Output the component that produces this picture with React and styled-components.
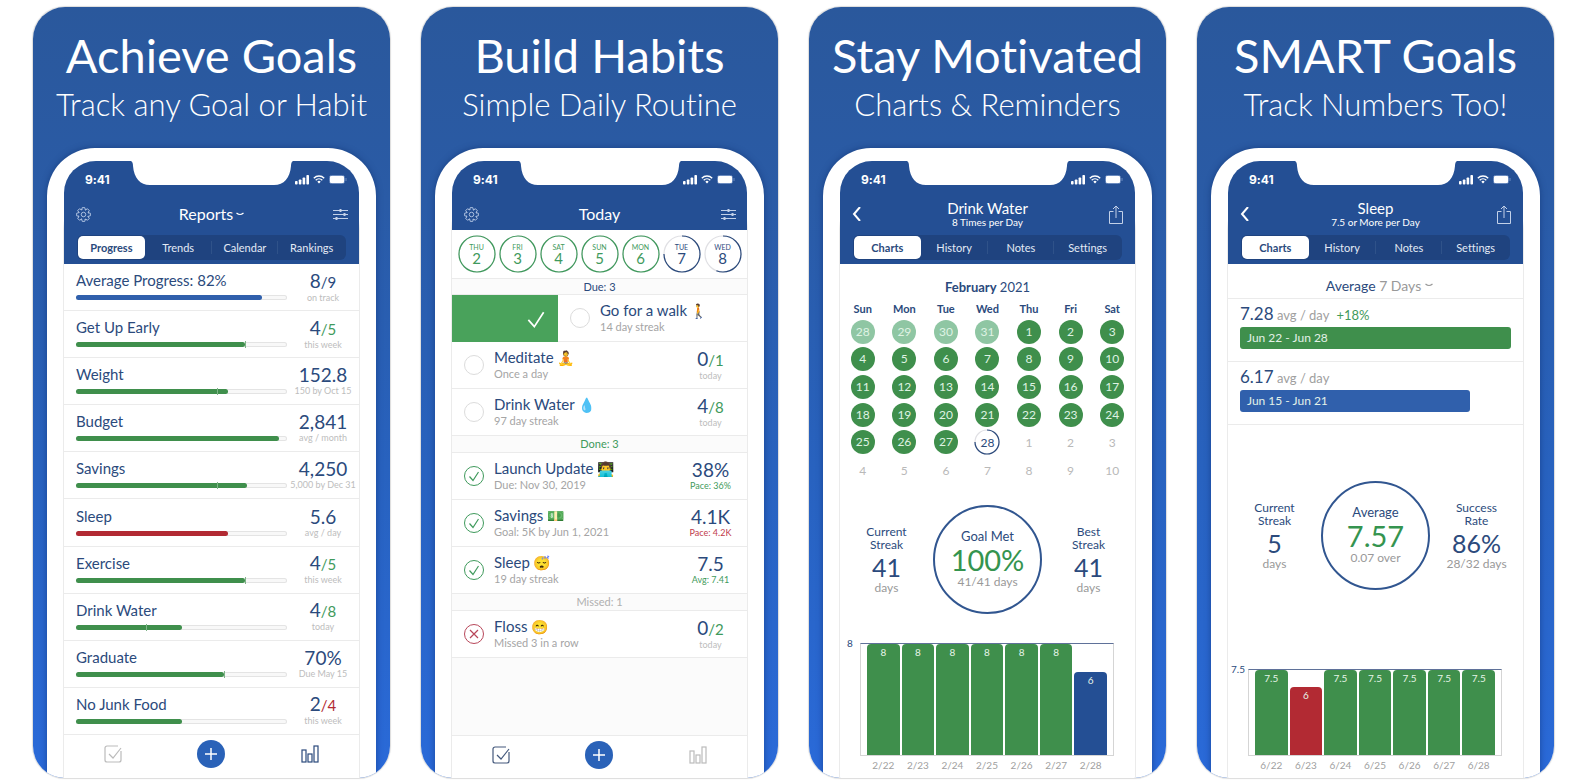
import React, { useState } from "react";
import styled, { createGlobalStyle } from "styled-components";

const navy = "#2b4a7c";
const green = "#3f8f4c";
const mint = "#3f9a5c";
const red = "#b22a33";
const blue = "#3060ac";
const line = "#ebebeb";

const GlobalStyle = createGlobalStyle`
  * {
    box-sizing: border-box;
  }
  body {
    margin: 0;
    background-color: #fff;
    font-family: Lato, "Liberation Sans", sans-serif;
    font-variant-ligatures: none;
    color: ${navy};
  }
  button {
    padding: 0;
    border: none;
    background: none;
    font: inherit;
    color: inherit;
    cursor: pointer;
  }
  h1, h2, h3, p, ul {
    margin: 0;
    padding: 0;
    font-weight: 400;
    list-style: none;
  }
  svg {
    display: block;
  }
`;

const Gallery = styled.main`
  display: grid;
  grid-template-columns: repeat(4, minmax(340px, 1fr));
  gap: 31px;
  min-height: 100vh;
  padding: 7px 30px 5px 33px;
`;

const Poster = styled.section`
  display: flex;
  flex-direction: column;
  overflow: hidden;
  border-radius: 32px;
  box-shadow: 0 0 1px 1px #dcdcdc;
  background-image: linear-gradient(#2a589c, #2a5ba6 25%, #2862bf 60%, #2a6ad9);
`;

const Headline = styled.header`
  padding: 17px 0 26px;
  color: #fff;
  text-align: center;
  white-space: nowrap;

  h1 {
    font-size: 47px;
    line-height: 62px;
  }
  p {
    font-size: 31px;
    font-weight: 300;
    line-height: 36px;
  }
`;

const Phone = styled.div`
  display: flex;
  flex: 1;
  flex-direction: column;
  margin: 0 14px;
  padding: 13px 17px 0;
  border-radius: 48px 48px 0 0;
  background-color: #fff;
  box-shadow: 0 0 6px rgba(10, 40, 100, 0.5);
`;

const Screen = styled.div`
  display: flex;
  flex: 1;
  flex-direction: column;
  overflow: hidden;
  border-radius: 32px 32px 0 0;
  box-shadow: 0 36px 0 1px ${line};
`;

const TopBar = styled.div`
  background-color: #244f94;
  color: #fff;
`;

const StatusRow = styled.div`
  display: grid;
  grid-template-columns: 1fr 162px 1fr;
  justify-items: center;
  align-items: center;
  height: 37px;

  & > svg {
    align-self: start;
  }
`;

const Clock = styled.span`
  font-family: Inter, sans-serif;
  font-size: 12px;
  font-weight: 700;
`;

const Signals = styled.div`
  display: flex;
  align-items: center;
  gap: 4px;
  padding-right: 10px;
`;

const NavRow = styled.div`
  display: grid;
  grid-template-columns: 38px 1fr 38px;
  justify-items: center;
  align-items: center;
  height: 32px;
`;

const NavTitle = styled.h2`
  display: flex;
  justify-content: center;
  align-items: center;
  gap: 3px;
  font-size: ${(p) => p.$size || "15px"};
  line-height: 16px;
`;

const NavNote = styled.p`
  font-size: 10px;
  line-height: 12px;
  text-align: center;
`;

const SegmentBox = styled.div`
  padding: 5px 0 4px;
`;

const Segments = styled.div`
  display: grid;
  grid-template-columns: repeat(4, 1fr);
  margin: 0 13px;
  padding: 1px;
  border-radius: 6px;
  background-color: #1f437f;
`;

const Segment = styled.button`
  height: 23px;
  border-radius: 5px;
  font-size: 11px;
  color: #e3eaf5;

  & + & {
    background-image: linear-gradient(#2f5289, #2f5289);
    background-size: 1px 13px;
    background-position: right center;
    background-repeat: no-repeat;
  }
  &&:last-child {
    background-image: none;
  }
  &&[aria-selected="true"] {
    background: #fff;
    color: ${navy};
    font-weight: 700;
  }
`;

const GoalList = styled.ul`
  display: grid;
  flex: 1;
  grid-auto-rows: 1fr;
`;

const Row = styled.li`
  display: grid;
  grid-template-columns: ${(p) => p.$columns || "1fr 72px"};
  align-items: center;
  min-height: 47px;
  padding-left: 12px;
  border-bottom: 1px solid ${line};
  background-color: #fff;
`;

const Name = styled.h3`
  font-size: 15px;
  line-height: 20px;
  white-space: nowrap;
`;

const Sub = styled.p`
  padding-bottom: 3px;
  font-size: 11px;
  line-height: 12px;
  color: #a5a5a5;
`;

const Track = styled.div`
  position: relative;
  height: 5px;
  margin: 5px 0 4px;
  border-radius: 3px;
  background-color: #f8f8f8;
  box-shadow: inset 0 0 0 1px #e4e4e4;
`;

const Fill = styled.div`
  height: 5px;
  border-radius: 3px;
  background-color: ${(p) => p.$color};
`;

const Marker = styled.i`
  position: absolute;
  top: -1px;
  width: 1px;
  height: 7px;
  background-color: #7fb588;
`;

const Figure = styled.div`
  text-align: center;
  white-space: nowrap;
`;

const Big = styled.p`
  font-size: 19px;
  line-height: 20px;

  span {
    font-size: 15px;
    color: ${(p) => p.$color};
  }
`;

const Tiny = styled.p`
  font-size: 9px;
  line-height: 12px;
  color: ${(p) => p.$color || "#bdbdbd"};
`;

const TabBar = styled.nav`
  display: grid;
  grid-template-columns: repeat(3, 1fr);
  justify-items: center;
  align-items: center;
  height: 43px;
  margin-top: auto;
  padding-bottom: 5px;
  border-top: ${(p) => (p.$edge ? `1px solid ${line}` : "none")};
  background-color: #fff;
`;

const AddButton = styled.button`
  display: grid;
  place-items: center;
  width: 28px;
  height: 28px;
  border-radius: 50%;
  background-color: #2a62b8;
`;

const Week = styled.div`
  display: grid;
  grid-template-columns: repeat(7, 1fr);
  justify-items: center;
  align-items: center;
  height: 48px;
  padding: 0 4px;
  background-color: #fff;
`;

const Stack = styled.span`
  display: grid;
  justify-content: center;
  place-items: center;

  & > * {
    grid-area: 1 / 1;
  }
`;

const TickBox = styled(Stack)`
  justify-content: start;
`;

const DayText = styled.span`
  display: flex;
  flex-direction: column;
  align-items: center;
  font-size: 15px;
  line-height: 15px;
  color: ${(p) => p.$color};

  small {
    font-size: 7px;
    line-height: 8px;
  }
`;

const TodayBody = styled.div`
  display: flex;
  flex: 1;
  flex-direction: column;
  background-color: #fbfbfb;
`;

const SectionBar = styled.p`
  height: 17px;
  border-top: 1px solid ${line};
  border-bottom: 1px solid ${line};
  background-color: #fbfbfb;
  font-size: 11px;
  line-height: 15px;
  text-align: center;
  color: ${(p) => p.$color};

  ul + & {
    border-top: none;
    line-height: 16px;
  }
`;

const Swiped = styled.li`
  display: grid;
  grid-template-columns: 106px 1fr;
`;

const SwipeAction = styled.button`
  display: flex;
  justify-content: flex-end;
  align-items: center;
  padding-right: 5px;
  background-color: #49a25b;
`;

const Tick = styled.input`
  appearance: none;
  width: 20px;
  height: 20px;
  margin: 0;
  border: 1px solid ${(p) => p.$color};
  border-radius: 50%;
  cursor: pointer;

  & + svg {
    pointer-events: none;
  }
`;

const Emoji = styled.span`
  font-family: "Noto Color Emoji", "Apple Color Emoji", sans-serif;
  font-size: 14px;
`;

const Calendar = styled.table`
  width: calc(100% - 4px);
  margin: 12px 2px 0;
  border-spacing: 0;
  table-layout: fixed;
  font-size: 12px;
  text-align: center;

  caption {
    font-size: 13px;
    line-height: 22px;
  }
  th {
    height: 20px;
    padding: 0;
    font-size: 11px;
    font-weight: 700;
  }
  td {
    height: 28px;
    padding: 0;
    color: #b9b9b9;
  }
  tbody tr:nth-child(3n + 1) td {
    height: 27px;
  }
`;

const Dot = styled.span`
  display: block;
  width: 24px;
  height: 24px;
  margin: 0 auto;
  border-radius: 50%;
  background-color: ${(p) => (p.$faded ? "#8fc6a3" : green)};
  line-height: 24px;
  color: #dff3e3;
`;

const DayNumber = styled.span`
  color: ${navy};
`;

const Stats = styled.div`
  display: grid;
  grid-template-columns: 1fr 109px 1fr;
  align-items: center;
  margin-top: ${(p) => p.$top};
`;

const Stat = styled.div`
  text-align: center;
  font-size: 12px;
  line-height: 13px;
  color: #999;

  h3 {
    font-size: 12px;
    line-height: 13px;
    color: ${navy};
  }
  p {
    padding-top: 2px;
    font-size: 25px;
    line-height: 28px;
    color: ${navy};
  }
`;

const Goal = styled.div`
  display: flex;
  flex-direction: column;
  justify-content: center;
  height: 109px;
  padding-bottom: 3px;
  border: 2px solid #315690;
  border-radius: 50%;
  text-align: center;
  font-size: 12px;
  line-height: 14px;
  color: #999;

  h3 {
    font-size: 13px;
    line-height: 16px;
    color: ${navy};
  }
  p {
    font-size: 29px;
    line-height: 31px;
    color: #35944f;
  }
`;

const Chart = styled.div`
  display: grid;
  grid-template-columns: 20px 1fr;
  margin-top: auto;
  padding: 0 21px 3px 0;
`;

const AxisLabel = styled.span`
  font-size: 10px;
  line-height: 1px;
  text-align: center;
`;

const Plot = styled.div`
  display: grid;
  grid-template-columns: repeat(7, 1fr);
  align-items: end;
  gap: 2px;
  height: ${(p) => p.$height};
  padding: 0 6px;
  border: 1px solid #d5d5d5;
  border-top-color: #5f7199;
`;

const Bar = styled.div`
  border-radius: 4px 4px 0 0;
  background-color: ${(p) => p.$color};
  font-size: 10px;
  line-height: 16px;
  text-align: center;
  color: #e6f5e8;
`;

const Dates = styled.div`
  display: grid;
  grid-column: 2;
  grid-template-columns: repeat(7, 1fr);
  gap: 2px;
  padding: 0 7px;
  font-size: 10px;
  line-height: 19px;
  text-align: center;
  color: #a0a0a0;
`;

const Period = styled.button`
  display: flex;
  justify-content: center;
  align-items: center;
  gap: 4px;
  height: 35px;
  padding: 8px 0 0 8px;
  border-bottom: 1px solid ${line};
  font-size: 14px;
  color: #999;

  b {
    font-weight: 400;
    color: ${navy};
  }
`;

const Span = styled.div`
  height: 63px;
  padding: 3px 12px 0;
  border-bottom: 1px solid ${line};
  font-size: 13px;
  line-height: 23px;
  color: #a0a0a0;

  b {
    font-size: 17px;
    font-weight: 400;
    color: ${navy};
  }
  em {
    padding-left: 4px;
    font-style: normal;
    color: ${mint};
  }
`;

const SpanBar = styled.div`
  height: 22px;
  padding-left: 7px;
  border-radius: 3px;
  background-color: ${(p) => p.$color};
  font-size: 12px;
  line-height: 22px;
  color: #e3f1e8;
`;

const Notch = () => (
  <svg width="162" height="24" viewBox="0 0 162 24">
    <path
      d="M0 0 Q2 1 2 5 C3 17 9 24 19 24 H143 C153 24 159 17 160 5 Q160 1 162 0Z"
      fill="#fff"
    />
  </svg>
);

const SignalIcons = () => (
  <Signals>
    <svg width="14" height="10" viewBox="0 0 14 10" fill="#fff">
      <rect x="0" y="6" width="2.6" height="3.5" rx="0.8" />
      <rect x="3.8" y="4.5" width="2.6" height="5" rx="0.8" />
      <rect x="7.6" y="2.5" width="2.6" height="7" rx="0.8" />
      <rect x="11.4" y="0" width="2.6" height="9.5" rx="0.8" />
    </svg>
    <svg width="12" height="9" viewBox="0 0 12 9" fill="none" stroke="#fff">
      <path d="M.8 3.2a7.4 7.4 0 0 1 10.4 0M2.7 5.2a4.7 4.7 0 0 1 6.6 0" strokeWidth="1.4" />
      <path d="M4.3 6.7a2.4 2.4 0 0 1 3.4 0L6 8.5z" fill="#fff" stroke="none" />
    </svg>
    <svg width="18" height="9" viewBox="0 0 18 9">
      <rect x="0.5" y="0.5" width="15" height="8" rx="2" fill="none" stroke="#6b8bbf" />
      <rect x="1" y="1" width="14" height="7" rx="1" fill="#fff" />
      <path d="M17 3v3" stroke="#6b8bbf" />
    </svg>
  </Signals>
);

const gearTeeth = [0, 45, 90, 135, 180, 225, 270, 315];

const GearIcon = () => (
  <svg width="15" height="15" viewBox="-12 -12 24 24" fill="none" stroke="#b4c6e3" strokeWidth="1.5">
    {gearTeeth.map((angle) => (
      <path key={angle} d="M-3 -7.2 -2 -11H2L3 -7.2Q4.5 -8 3 -7.2" transform={`rotate(${angle})`} />
    ))}
    <circle r="3.6" />
  </svg>
);

const SlidersIcon = () => (
  <svg width="15" height="13" viewBox="0 0 15 13" stroke="#c3d1e8" strokeWidth="1">
    <path d="M0 2.5h15M0 6.5h15M0 10.5h15" />
    <path d="M7.5 1v3M11.5 5v3M3.5 9v3" strokeWidth="2" />
  </svg>
);

const BackIcon = () => (
  <svg width="14" height="14" viewBox="0 0 14 14" fill="none" stroke="#fff" strokeWidth="2">
    <path d="M8 0 2 7l6 7" />
  </svg>
);

const ShareIcon = () => (
  <svg width="14" height="19" viewBox="0 0 14 19" fill="none" stroke="#c3d1e8">
    <path d="M4.5 6.5h-4v12h13v-12h-4M7 13V1M4 4l3-3 3 3" />
  </svg>
);

const Caret = ({ color }) => (
  <svg width="8" height="4" viewBox="0 0 8 4" fill="none" stroke={color} strokeWidth="1.2">
    <path d="M.5 1Q4 4 7.5 1" />
  </svg>
);

const CheckIcon = ({ size, color, width }) => (
  <svg width={size} height={size} viewBox="0 0 20 20" fill="none" stroke={color} strokeWidth={width}>
    <path d="M5.5 10.5 9 14.5 14.5 6" />
  </svg>
);

const CrossIcon = () => (
  <svg width="20" height="20" viewBox="0 0 20 20" stroke="#b8475a" strokeWidth="1.2">
    <path d="m6 6 8 8M14 6l-8 8" />
  </svg>
);

const Ring = ({ size, share, color }) => {
  const r = size / 2 - 1;
  return (
    <svg width={size} height={size} viewBox={`0 0 ${size} ${size}`} fill="none" strokeWidth="1.2">
      <circle cx={size / 2} cy={size / 2} r={r} stroke="#e0e0e4" />
      <circle
        cx={size / 2}
        cy={size / 2}
        r={r}
        stroke={color}
        pathLength="100"
        strokeDasharray={`${share} 100`}
        transform={`rotate(-90 ${size / 2} ${size / 2})`}
      />
    </svg>
  );
};

const goals = [
  { name: "Average Progress: 82%", done: 88, big: "8", of: "/9", note: "on track", ofColor: navy, color: blue },
  { name: "Get Up Early", done: 80, mark: 80, big: "4", of: "/5", note: "this week" },
  { name: "Weight", done: 72, mark: 67, big: "152.8", note: "150 by Oct 15" },
  { name: "Budget", done: 96, big: "2,841", note: "avg / month" },
  { name: "Savings", done: 81, mark: 67, big: "4,250", note: "5,000 by Dec 31" },
  { name: "Sleep", done: 72, big: "5.6", note: "avg / day", color: red },
  { name: "Exercise", done: 80, mark: 80, big: "4", of: "/5", note: "this week" },
  { name: "Drink Water", done: 50, mark: 33, big: "4", of: "/8", note: "today" },
  { name: "Graduate", done: 70, mark: 70, big: "70%", note: "Due May 15" },
  { name: "No Junk Food", done: 50, big: "2", of: "/4", note: "this week", ofColor: red },
];

const week = [
  ["THU", 2, 100],
  ["FRI", 3, 100],
  ["SAT", 4, 100],
  ["SUN", 5, 100],
  ["MON", 6, 100],
  ["TUE", 7, 75],
  ["WED", 8, 56],
];

const due = [
  { name: "Meditate", emoji: "🧘", sub: "Once a day", big: "0", of: "/1", note: "today" },
  { name: "Drink Water", emoji: "💧", sub: "97 day streak", big: "4", of: "/8", note: "today" },
];

const done = [
  { name: "Launch Update", emoji: "👨‍💻", sub: "Due: Nov 30, 2019", big: "38%", note: "Pace: 36%", noteColor: mint },
  { name: "Savings", emoji: "💵", sub: "Goal: 5K by Jun 1, 2021", big: "4.1K", note: "Pace: 4.2K", noteColor: "#bf3b4b" },
  { name: "Sleep", emoji: "😴", sub: "19 day streak", big: "7.5", note: "Avg: 7.41", noteColor: mint },
];

const missed = [{ name: "Floss", emoji: "😁", sub: "Missed 3 in a row", big: "0", of: "/2", note: "today" }];

const weekdays = ["Sun", "Mon", "Tue", "Wed", "Thu", "Fri", "Sat"];

const days = [
  [28, 29, 30, 31, 1, 2, 3],
  [4, 5, 6, 7, 8, 9, 10],
  [11, 12, 13, 14, 15, 16, 17],
  [18, 19, 20, 21, 22, 23, 24],
  [25, 26, 27, 28, 1, 2, 3],
  [4, 5, 6, 7, 8, 9, 10],
];

const waterBars = [22, 23, 24, 25, 26, 27, 28].map((d) =>
  d === 28 ? { date: "2/28", value: 6, size: 75, color: "#244f94" } : { date: `2/${d}`, value: 8, size: 100 }
);

const sleepBars = [22, 23, 24, 25, 26, 27, 28].map((d) =>
  d === 23 ? { date: "6/23", value: 6, size: 80, color: red } : { date: `6/${d}`, value: 7.5, size: 100 }
);

const Tabs = ({ active }) => (
  <TabBar $edge={active === "today"}>
    <button aria-label="Today list">
      <svg
        width="18"
        height="18"
        viewBox="0 0 18 18"
        fill="none"
        stroke={active === "today" ? "#44597c" : "#bbb"}
        strokeWidth="1.2"
      >
        <path d="M14 1H3a2 2 0 0 0-2 2v12a2 2 0 0 0 2 2h12a2 2 0 0 0 2-2V6" />
        <path d="m5 9 4 4 8-10" />
      </svg>
    </button>
    <AddButton aria-label="Add">
      <svg width="14" height="14" viewBox="0 0 14 14" stroke="#fff" strokeWidth="1.5">
        <path d="M7 1v12M1 7h12" />
      </svg>
    </AddButton>
    <button aria-label="Reports">
      <svg
        width="18"
        height="18"
        viewBox="0 0 18 18"
        fill="none"
        stroke={active === "reports" ? navy : "#bbb"}
        strokeWidth="1.2"
      >
        <rect x="1" y="5" width="4" height="12" />
        <rect x="7" y="9" width="4" height="8" />
        <rect x="13" y="1" width="4" height="16" />
      </svg>
    </button>
  </TabBar>
);

const SegmentedControl = ({ items }) => {
  const [selected, setSelected] = useState(items[0]);
  return (
    <SegmentBox>
      <Segments role="tablist">
        {items.map((item) => (
          <Segment key={item} role="tab" aria-selected={item === selected} onClick={() => setSelected(item)}>
            {item}
          </Segment>
        ))}
      </Segments>
    </SegmentBox>
  );
};

const PosterCard = ({ title, text, nav, children }) => (
  <Poster>
    <Headline>
      <h1>{title}</h1>
      <p>{text}</p>
    </Headline>
    <Phone>
      <Screen>
        <TopBar>
          <StatusRow>
            <Clock>9:41</Clock>
            <Notch />
            <SignalIcons />
          </StatusRow>
          {nav}
        </TopBar>
        {children}
      </Screen>
    </Phone>
  </Poster>
);

const ListNav = ({ title, caret }) => (
  <NavRow>
    <button aria-label="Preferences">
      <GearIcon />
    </button>
    <NavTitle $size="16px">
      {title}
      {caret && <Caret color="#fff" />}
    </NavTitle>
    <button aria-label="Filter">
      <SlidersIcon />
    </button>
  </NavRow>
);

const DetailNav = ({ title, note }) => (
  <>
    <NavRow>
      <button aria-label="Back">
        <BackIcon />
      </button>
      <div>
        <NavTitle>{title}</NavTitle>
        <NavNote>{note}</NavNote>
      </div>
      <button aria-label="Share">
        <ShareIcon />
      </button>
    </NavRow>
    <SegmentedControl items={["Charts", "History", "Notes", "Settings"]} />
  </>
);

const Score = ({ item }) => (
  <Figure>
    <Big $color={item.ofColor || mint}>
      {item.big}
      {item.of && <span>{item.of}</span>}
    </Big>
    <Tiny $color={item.noteColor}>{item.note}</Tiny>
  </Figure>
);

const GoalRow = ({ item }) => (
  <Row>
    <div>
      <Name>{item.name}</Name>
      <Track role="progressbar" aria-label={item.name} aria-valuenow={item.done}>
        <Fill $color={item.color || green} style={{ width: `${item.done}%` }} />
        {item.mark && <Marker style={{ left: `${item.mark}%` }} />}
      </Track>
    </div>
    <Score item={item} />
  </Row>
);

const tickColors = { done: mint, missed: "#b8475a" };

const HabitRow = ({ item, state, as }) => (
  <Row as={as} $columns={item.big ? "30px 1fr 73px" : "30px 1fr"}>
    <TickBox>
      <Tick
        type="checkbox"
        aria-label={item.name}
        defaultChecked={state === "done"}
        $color={tickColors[state] || "#dcdcdc"}
      />
      {state === "done" && <CheckIcon size={20} color={mint} width={1.2} />}
      {state === "missed" && <CrossIcon />}
    </TickBox>
    <div>
      <Name>
        {item.name} <Emoji>{item.emoji}</Emoji>
      </Name>
      <Sub>{item.sub}</Sub>
    </div>
    {item.big && <Score item={item} />}
  </Row>
);

const StatBlock = ({ top, bottom, value, unit }) => (
  <Stat>
    <h3>
      {top}
      <br />
      {bottom}
    </h3>
    <p>{value}</p>
    {unit}
  </Stat>
);

const BarChart = ({ axis, height, bars }) => (
  <Chart>
    <AxisLabel>{axis}</AxisLabel>
    <Plot $height={height}>
      {bars.map((bar) => (
        <Bar key={bar.date} $color={bar.color || green} style={{ height: `${bar.size}%` }}>
          {bar.value}
        </Bar>
      ))}
    </Plot>
    <Dates>
      {bars.map((bar) => (
        <span key={bar.date}>{bar.date}</span>
      ))}
    </Dates>
  </Chart>
);

const CalendarDay = ({ day, row }) => {
  if (row === 4 && day === 28) {
    return (
      <Stack>
        <Ring size={26} share={75} color={navy} />
        <DayNumber>{day}</DayNumber>
      </Stack>
    );
  }
  if (row === 5 || (row === 4 && day < 25)) return day;
  return <Dot $faded={row === 0 && day > 3}>{day}</Dot>;
};

const App = () => (
  <>
    <GlobalStyle />
    <Gallery>
      <PosterCard
        title="Achieve Goals"
        text="Track any Goal or Habit"
        nav={
          <>
            <ListNav title="Reports" caret />
            <SegmentedControl items={["Progress", "Trends", "Calendar", "Rankings"]} />
          </>
        }
      >
        <GoalList>
          {goals.map((item) => (
            <GoalRow key={item.name} item={item} />
          ))}
        </GoalList>
        <Tabs active="reports" />
      </PosterCard>

      <PosterCard title="Build Habits" text="Simple Daily Routine" nav={<ListNav title="Today" />}>
        <TodayBody>
          <Week>
            {week.map(([name, day, share]) => {
              const color = share === 100 ? mint : navy;
              return (
                <Stack key={name}>
                  <Ring size={38} share={share} color={color} />
                  <DayText $color={color}>
                    <small>{name}</small>
                    {day}
                  </DayText>
                </Stack>
              );
            })}
          </Week>
          <SectionBar $color={navy}>Due: 3</SectionBar>
          <ul>
            <Swiped>
              <SwipeAction aria-label="Complete">
                <CheckIcon size={34} color="#fff" width={1} />
              </SwipeAction>
              <HabitRow as="div" item={{ name: "Go for a walk", emoji: "🚶", sub: "14 day streak" }} />
            </Swiped>
            {due.map((item) => (
              <HabitRow key={item.name} item={item} />
            ))}
          </ul>
          <SectionBar $color={mint}>Done: 3</SectionBar>
          <ul>
            {done.map((item) => (
              <HabitRow key={item.name} item={item} state="done" />
            ))}
          </ul>
          <SectionBar $color="#b0b0b0">Missed: 1</SectionBar>
          <ul>
            {missed.map((item) => (
              <HabitRow key={item.name} item={item} state="missed" />
            ))}
          </ul>
          <Tabs active="today" />
        </TodayBody>
      </PosterCard>

      <PosterCard
        title="Stay Motivated"
        text="Charts & Reminders"
        nav={<DetailNav title="Drink Water" note="8 Times per Day" />}
      >
        <Calendar>
          <caption>
            <strong>February</strong> 2021
          </caption>
          <thead>
            <tr>
              {weekdays.map((name) => (
                <th key={name}>{name}</th>
              ))}
            </tr>
          </thead>
          <tbody>
            {days.map((row, i) => (
              <tr key={i}>
                {row.map((day) => (
                  <td key={day}>
                    <CalendarDay day={day} row={i} />
                  </td>
                ))}
              </tr>
            ))}
          </tbody>
        </Calendar>
        <Stats $top="21px">
          <StatBlock top="Current" bottom="Streak" value="41" unit="days" />
          <Goal>
            <h3>Goal Met</h3>
            <p>100%</p>
            41/41 days
          </Goal>
          <StatBlock top="Best" bottom="Streak" value="41" unit="days" />
        </Stats>
        <BarChart axis="8" height="113px" bars={waterBars} />
      </PosterCard>

      <PosterCard
        title="SMART Goals"
        text="Track Numbers Too!"
        nav={<DetailNav title="Sleep" note="7.5 or More per Day" />}
      >
        <Period>
          <span>
            <b>Average</b> 7 Days
          </span>
          <Caret color="#999" />
        </Period>
        <Span>
          <b>7.28</b> avg / day <em>+18%</em>
          <SpanBar $color={green} style={{ width: "100%" }}>
            Jun 22 - Jun 28
          </SpanBar>
        </Span>
        <Span>
          <b>6.17</b> avg / day
          <SpanBar $color={blue} style={{ width: "85%" }}>
            Jun 15 - Jun 21
          </SpanBar>
        </Span>
        <Stats $top="56px">
          <StatBlock top="Current" bottom="Streak" value="5" unit="days" />
          <Goal>
            <h3>Average</h3>
            <p>7.57</p>
            0.07 over
          </Goal>
          <StatBlock top="Success" bottom="Rate" value="86%" unit="28/32 days" />
        </Stats>
        <BarChart axis="7.5" height="87px" bars={sleepBars} />
      </PosterCard>
    </Gallery>
  </>
);

export default App;
